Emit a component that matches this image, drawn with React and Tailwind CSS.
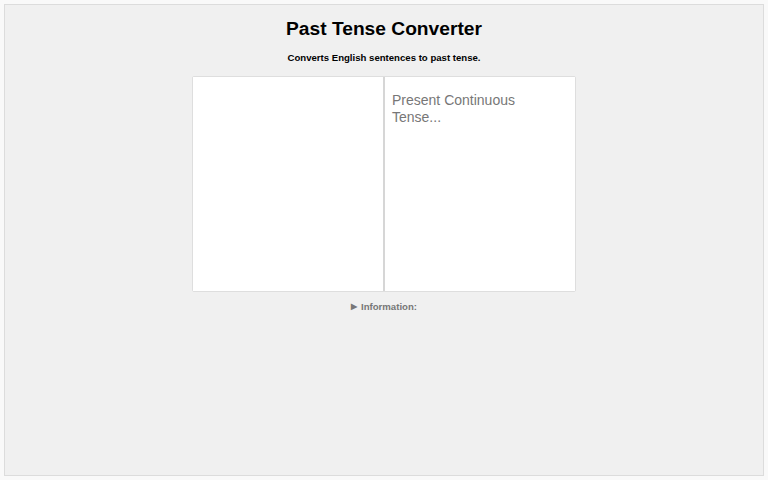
export default function App() {
  return (
    <div className="w-[768px] h-[480px] bg-[#f9f9f9] p-1" style={{ fontFamily: '"Liberation Sans", Arial, sans-serif' }}>
      <div className="h-[472px] w-[760px] border border-[#dcdcdc] bg-[#f0f0f0] flex flex-col items-center">
        <h1 className="mt-[12px] text-[19.2px] leading-[24px] font-bold text-black">Past Tense Converter</h1>
        <p className="mt-[11px] text-[9.6px] leading-[12px] font-bold text-black">Converts English sentences to past tense.</p>
        <div className="mt-[12px] flex w-[384px] h-[216px] rounded-[2px] border border-[#dedede] bg-white">
          <textarea className="w-[191px] h-full resize-none border-r border-[#d6d6d6] bg-white p-2 text-[14px] outline-none" />
          <textarea
            className="flex-1 h-full resize-none border-l border-[#d6d6d6] bg-white pl-[7px] pr-2 pt-[15px] text-[14px] leading-[17px] text-[#333] placeholder:text-[#777] outline-none"
            placeholder="Present Continuous Tense..."
          />
        </div>
        <div className="mt-[9px] flex items-center gap-[4px] text-[9.6px] leading-[12px] font-bold text-[#777]">
          <span className="text-[8px]">▶</span>
          <span>Information:</span>
        </div>
      </div>
    </div>
  );
}
